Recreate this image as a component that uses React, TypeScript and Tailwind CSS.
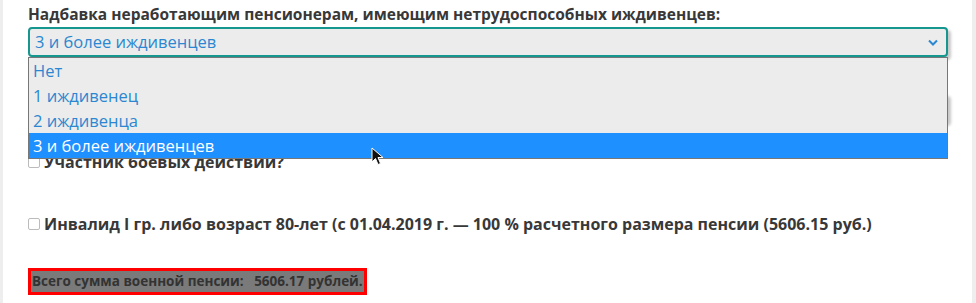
const options = ["Нет", "1 иждивенец", "2 иждивенца", "3 и более иждивенцев"]

function Chevron() {
  return (
    <svg width="10" height="7" viewBox="0 0 10 7" className="shrink-0">
      <path d="M1 1.5 L5 5.5 L9 1.5" fill="none" stroke="#2b87d1" strokeWidth="2" />
    </svg>
  )
}

function Cursor() {
  return (
    <svg width="14" height="20" viewBox="0 0 14 20" className="absolute z-20 left-[368px] top-[147px]">
      <path d="M1 1 L1 15 L4.5 11.5 L7 17.5 L9.5 16.5 L7 10.5 L12 10.5 Z" fill="#111" stroke="#fff" strokeWidth="1" />
    </svg>
  )
}

function CheckRow({ label }: { label: string }) {
  return (
    <label className="flex items-center gap-[4px] text-[16px] font-bold text-[#383838] leading-[24px]">
      <span className="w-[12px] h-[12px] rounded-[2px] border border-[#bbb] bg-white shrink-0" />
      {label}
    </label>
  )
}

export default function App() {
  return (
    <div className="flex w-full h-[303px] bg-white overflow-hidden" style={{ fontFamily: '"Open Sans", "Noto Sans", sans-serif' }}>
      <div className="w-[3px] bg-[#eeeeee]" />
      <div className="flex-1 relative pl-[25px] pr-[20px] pt-[2px]">
        <div className="text-[15.5px] font-bold text-[#383838] leading-[24px]">
          Надбавка неработающим пенсионерам, имеющим нетрудоспособных иждивенцев:
        </div>

        {/* Select with open list */}
        <div className="relative w-[920px] mt-[1px]">
          <div className="h-[30px] flex items-center justify-between pl-[5px] pr-[8px] rounded-[4px] border-2 border-[#15978f] bg-[#ececec] shadow-[3px_3px_3px_#c8c8c8] text-[16.5px] text-[#2b87d1]">
            <span>3 и более иждивенцев</span>
            <Chevron />
          </div>

          <ul className="absolute z-10 left-0 top-[30px] w-[920px] border border-[#777] bg-[#ececec] text-[16.5px]">
            {options.map((o, i) => (
              <li
                key={o}
                className={
                  i === 3
                    ? "h-[25px] pl-[4px] leading-[25px] bg-[#1e90ff] text-white"
                    : "h-[25px] pl-[4px] leading-[25px] text-[#2b87d1]"
                }
              >
                {o}
              </li>
            ))}
          </ul>
        </div>

        {/* Field hidden under the open list */}
        <div className="mt-[10px] text-[16px] font-bold text-[#383838] leading-[24px]">Районный коэффициент:</div>
        <div className="w-[920px] h-[30px] mt-[2px] rounded-[4px] bg-[#ececec] shadow-[3px_3px_3px_#c8c8c8]" />

        <div className="mt-[27px] flex flex-col gap-[38px]">
          <CheckRow label="Участник боевых действий?" />
          <CheckRow label="Инвалид I гр. либо возраст 80-лет (с 01.04.2019 г. — 100 % расчетного размера пенсии (5606.15 руб.)" />
        </div>

        <div className="mt-[32px] inline-flex border-[3px] border-[#ff0000] bg-[#7a7a7a] px-[1px] h-[27px] items-center">
          <span className="whitespace-pre text-[13.5px] font-bold text-[#333]">Всего сумма военной пенсии:   5606.17 рублей.</span>
        </div>

        <Cursor />
      </div>
      <div className="w-[4px] bg-[#eeeeee]" />
    </div>
  )
}
